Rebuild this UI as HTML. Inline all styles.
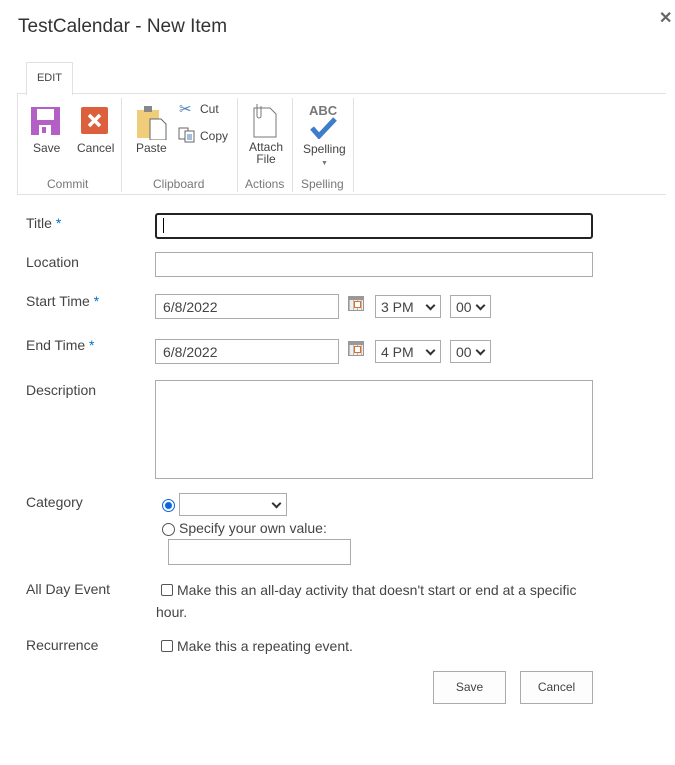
<!DOCTYPE html>
<html><head><style>
*{box-sizing:border-box}
body{margin:0;width:675px;height:765px;background:#fff;font-family:"Liberation Sans",sans-serif;color:#444;position:relative;overflow:hidden}
.a{position:absolute}
.t{font-size:14px;color:#444;white-space:nowrap}
.box{position:absolute;border:1px solid #ababab;background:#fff}
.sel{position:absolute;border:1px solid #ababab;background:#fff;font-size:14px;color:#444;padding:3px 0 0 5px}
.sel:after{content:"";position:absolute;right:6px;top:6px;width:5px;height:5px;border-right:2px solid #333;border-bottom:2px solid #333;transform:rotate(45deg)}
.req{color:#0072c6}
.rl{font-size:12px;color:#444;position:absolute;text-align:center;white-space:nowrap}
.grp{font-size:12px;color:#777;position:absolute;top:177px;white-space:nowrap}
.sep{position:absolute;top:98px;width:1px;height:94px;background:#e1e1e1}
.btn{position:absolute;border:1px solid #ababab;background:#fdfdfd;font-size:12px;color:#444;text-align:center;line-height:31px}
.cb{position:absolute;width:12px;height:12px;border:1px solid #555;border-radius:2px;background:#fff}
.cal{position:absolute;width:16px;height:15px;background:
linear-gradient(#999,#999) 0 0/16px 3px no-repeat,
repeating-linear-gradient(90deg,#bbb 0 1px,#eee 1px 4px);border:1px solid #999}
.cal:after{content:"";position:absolute;right:2px;bottom:2px;width:5px;height:5px;border:1px solid #e07020;background:#fff}
</style></head><body>
<div class="a" style="left:18px;top:16px;font-size:19px;color:#333">TestCalendar - New Item</div>
<div class="a" style="left:659px;top:8px;font-size:16px;font-weight:bold;color:#666">✕</div>

<div class="a" style="left:17px;top:93px;width:649px;height:102px;border:1px solid #e1e1e1;border-right:none"></div>
<div class="a" style="left:26px;top:62px;width:47px;height:33px;border:1px solid #e1e1e1;border-bottom:none;background:#fff;font-size:11px;color:#444;text-align:center;line-height:31px">EDIT</div>

<svg class="a" style="left:31px;top:107px" width="29" height="28"><rect width="29" height="28" fill="#b35fc6"/><rect x="6" y="2" width="17" height="11" fill="#fff"/><rect x="8" y="18" width="12" height="10" fill="#fff"/><rect x="11" y="20" width="4" height="6" fill="#b35fc6"/></svg>
<div class="rl" style="left:33px;top:141px">Save</div>
<svg class="a" style="left:81px;top:107px" width="27" height="27"><rect width="27" height="27" rx="2" fill="#dd603c"/><path d="M8 8L19 19M19 8L8 19" stroke="#fff" stroke-width="3.5"/></svg>
<div class="rl" style="left:77px;top:141px">Cancel</div>
<div class="sep" style="left:121px"></div>
<div class="grp" style="left:47px">Commit</div>

<svg class="a" style="left:136px;top:104px" width="32" height="36"><rect x="1" y="6" width="22" height="28" fill="#f0cd7a"/><rect x="8" y="2" width="8" height="6" fill="#888"/><path d="M14 15h11l5 5v16H14z" fill="#fff" stroke="#666"/></svg>
<div class="rl" style="left:136px;top:141px">Paste</div>
<div class="a" style="left:179px;top:100px;font-size:15px;color:#4a7bb7">✂</div>
<div class="rl" style="left:200px;top:102px">Cut</div>
<svg class="a" style="left:178px;top:127px" width="18" height="16"><rect x="1" y="1" width="9" height="11" fill="#fff" stroke="#666"/><rect x="7" y="4" width="9" height="11" fill="#fff" stroke="#666"/><path d="M9 8h5M9 10h5M9 12h5" stroke="#4a7bb7"/></svg>
<div class="rl" style="left:200px;top:129px">Copy</div>
<div class="sep" style="left:237px"></div>
<div class="grp" style="left:153px">Clipboard</div>

<svg class="a" style="left:250px;top:102px" width="28" height="36"><path d="M4 6h16l6 6v23H4z" fill="#fff" stroke="#777"/><path d="M7 2v12a2 2 0 0 0 4 0V4" fill="none" stroke="#777"/></svg>
<div class="rl" style="left:249px;top:141px;line-height:12px">Attach<br>File</div>
<div class="sep" style="left:292px"></div>
<div class="grp" style="left:245px">Actions</div>

<div class="a" style="left:309px;top:103px;font-size:13px;font-weight:bold;color:#777">ABC</div>
<svg class="a" style="left:309px;top:117px" width="28" height="22"><path d="M3 11l7 8L26 2" fill="none" stroke="#3d7dca" stroke-width="5"/></svg>
<div class="rl" style="left:303px;top:142px">Spelling</div>
<div class="a" style="left:321px;top:160px;font-size:7px;color:#777">▼</div>
<div class="sep" style="left:353px"></div>
<div class="grp" style="left:301px">Spelling</div>

<div class="t a" style="left:26px;top:215px">Title <span class="req">*</span></div>
<div class="box" style="left:155px;top:213px;width:438px;height:26px;border:2px solid #222;border-radius:3px"></div>
<div class="a" style="left:163px;top:218px;width:1px;height:15px;background:#000"></div>
<div class="t a" style="left:26px;top:254px">Location</div>
<div class="box" style="left:155px;top:252px;width:438px;height:25px"></div>
<div class="t a" style="left:26px;top:293px">Start Time <span class="req">*</span></div>
<div class="box t" style="left:155px;top:294px;width:184px;height:25px;padding:4px 0 0 7px">6/8/2022</div>
<div class="cal" style="left:348px;top:296px"></div>
<div class="sel" style="left:375px;top:295px;width:66px;height:23px">3 PM</div>
<div class="sel" style="left:450px;top:295px;width:41px;height:23px">00</div>
<div class="t a" style="left:26px;top:337px">End Time <span class="req">*</span></div>
<div class="box t" style="left:155px;top:339px;width:184px;height:25px;padding:4px 0 0 7px">6/8/2022</div>
<div class="cal" style="left:348px;top:341px"></div>
<div class="sel" style="left:375px;top:340px;width:66px;height:23px">4 PM</div>
<div class="sel" style="left:450px;top:340px;width:41px;height:23px">00</div>
<div class="t a" style="left:26px;top:382px">Description</div>
<div class="box" style="left:155px;top:380px;width:438px;height:99px"></div>
<div class="t a" style="left:26px;top:494px">Category</div>
<div class="a" style="left:162px;top:499px;width:13px;height:13px;border-radius:50%;border:1px solid #0a66d8;background:radial-gradient(#0a66d8 3px,#fff 4px)"></div>
<div class="sel" style="left:179px;top:493px;width:108px;height:23px"></div>
<div class="a" style="left:162px;top:523px;width:13px;height:13px;border-radius:50%;border:1px solid #555"></div>
<div class="t a" style="left:179px;top:520px">Specify your own value:</div>
<div class="box" style="left:168px;top:539px;width:183px;height:26px"></div>
<div class="t a" style="left:26px;top:581px">All Day Event</div>
<div class="cb" style="left:161px;top:584px"></div>
<div class="t a" style="left:177px;top:582px">Make this an all-day activity that doesn't start or end at a specific</div>
<div class="t a" style="left:156px;top:604px">hour.</div>
<div class="t a" style="left:26px;top:637px">Recurrence</div>
<div class="cb" style="left:161px;top:640px"></div>
<div class="t a" style="left:177px;top:638px">Make this a repeating event.</div>
<div class="btn" style="left:433px;top:671px;width:73px;height:33px">Save</div>
<div class="btn" style="left:520px;top:671px;width:73px;height:33px">Cancel</div>
</body></html>
